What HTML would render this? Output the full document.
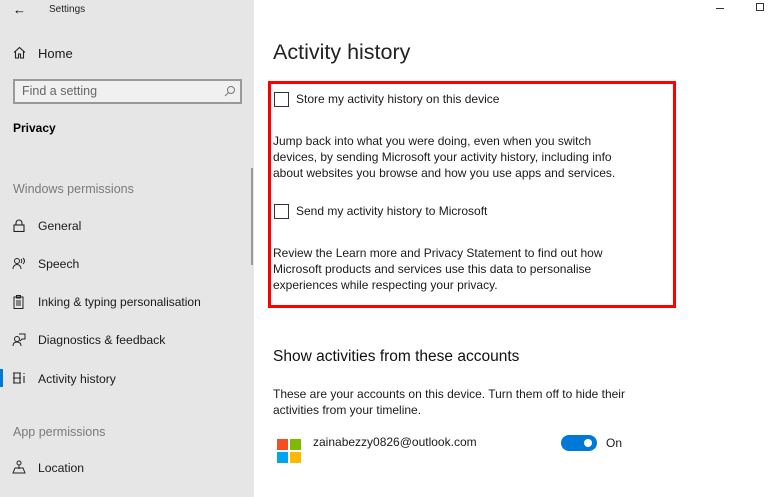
<!DOCTYPE html>
<html><head><style>
*{margin:0;padding:0;box-sizing:border-box}
body{width:768px;height:497px;overflow:hidden;background:#fff;font-family:"Liberation Sans",sans-serif;color:#000;position:relative}
.a{position:absolute;white-space:nowrap}
#side{position:absolute;left:0;top:0;width:254px;height:497px;background:#e6e6e6}
.nav{font-size:12.2px;color:#1a1a1a}
.gray{color:#7a7a7a;font-size:12.5px}
.t{font-size:12px;color:#1a1a1a}
.cb{position:absolute;width:15px;height:15px;border:1.5px solid #333}
</style></head><body>
<div id="side">
  <div class="a" style="left:13px;top:2px;font-size:13px">&#8592;</div>
  <div class="a" style="left:49px;top:4px;font-size:10px;color:#222">Settings</div>
  <svg class="a" style="left:13px;top:46px" width="13" height="13" viewBox="0 0 13 13" fill="none" stroke="#222" stroke-width="1.1"><path d="M1 6.5L6.5 1.5L12 6.5M2.5 5v7h3v-4h2v4h3V5"/></svg>
  <div class="a nav" style="left:38px;top:46px;font-size:13px">Home</div>
  <div class="a" style="left:13px;top:79px;width:229px;height:25px;border:2px solid #999;background:#f0f0f0"></div>
  <div class="a" style="left:22px;top:84px;font-size:12.5px;color:#666">Find a setting</div>
  <svg class="a" style="left:224px;top:85px" width="12" height="12" viewBox="0 0 12 12" fill="none" stroke="#777"><circle cx="7" cy="5" r="3.5"/><path d="M4.5 7.5L1 11"/></svg>
  <div class="a" style="left:13px;top:121px;font-size:12px;font-weight:bold">Privacy</div>
  <div class="a gray" style="left:13px;top:182px">Windows permissions</div>
  <div class="a" style="left:251px;top:168px;width:2px;height:97px;background:#999"></div>
  <svg class="a" style="left:13px;top:219px" width="12" height="13" viewBox="0 0 12 13" fill="none" stroke="#222" stroke-width="1.1"><rect x="1" y="6" width="10" height="6.5"/><path d="M3 6V4a3 3 0 0 1 6 0v2"/></svg>
  <div class="a nav" style="left:38px;top:219px">General</div>
  <svg class="a" style="left:12px;top:257px" width="14" height="13" viewBox="0 0 14 13" fill="none" stroke="#222" stroke-width="1"><circle cx="5" cy="4" r="2.5"/><path d="M1 12c0-3 2-4.5 4-4.5s4 1.5 4 4.5M9 2c1 1 1 3 0 4M11 1c2 2 2 4 0 6"/></svg>
  <div class="a nav" style="left:38px;top:257px">Speech</div>
  <svg class="a" style="left:13px;top:295px" width="11" height="14" viewBox="0 0 11 14" fill="none" stroke="#222" stroke-width="1"><rect x="1" y="2" width="9" height="11.5"/><rect x="3.5" y="0.5" width="4" height="2.5"/><path d="M3 6h5M3 8h5M3 10h5"/></svg>
  <div class="a nav" style="left:38px;top:295px;font-size:12px">Inking &amp; typing personalisation</div>
  <svg class="a" style="left:12px;top:333px" width="14" height="14" viewBox="0 0 14 14" fill="none" stroke="#222" stroke-width="1"><circle cx="5" cy="6" r="2.5"/><path d="M1 13c0-3 2-4 4-4s4 1 4 4M7 1h6v5h-3l-2 2"/></svg>
  <div class="a nav" style="left:38px;top:333px">Diagnostics &amp; feedback</div>
  <div class="a" style="left:0;top:369px;width:3px;height:18px;background:#0078d7"></div>
  <svg class="a" style="left:12px;top:372px" width="15" height="12" viewBox="0 0 15 12" fill="none" stroke="#222" stroke-width="1.1"><path d="M1 1h8M1 11h8M2 1v10M8 1v10M1 6h8M12 1v1M12 4v7"/></svg>
  <div class="a nav" style="left:38px;top:372px">Activity history</div>
  <div class="a gray" style="left:13px;top:425px">App permissions</div>
  <svg class="a" style="left:12px;top:460px" width="14" height="14" viewBox="0 0 14 14" fill="none" stroke="#222" stroke-width="1"><circle cx="7" cy="3" r="2"/><path d="M7 5v4M1 13l2-5h8l2 5z"/></svg>
  <div class="a nav" style="left:38px;top:461px">Location</div>
</div>
<div class="a" style="left:716px;top:8px;width:8px;height:1px;background:#333"></div>
<div class="a" style="left:756px;top:3px;width:8px;height:8px;border:1px solid #333"></div>
<div class="a" style="left:273px;top:40px;font-size:21.5px;color:#222">Activity history</div>
<div class="a" style="left:268px;top:81px;width:408px;height:227px;border:3px solid #f00"></div>
<div class="cb" style="left:274px;top:92px"></div>
<div class="a t" style="left:296px;top:92px">Store my activity history on this device</div>
<div class="a t" style="left:273px;top:133px;line-height:16px">Jump back into what you were doing, even when you switch<br>devices, by sending Microsoft your activity history, including info<br>about websites you browse and how you use apps and services.</div>
<div class="cb" style="left:274px;top:204px"></div>
<div class="a t" style="left:296px;top:204px">Send my activity history to Microsoft</div>
<div class="a t" style="left:273px;top:245px;line-height:16px">Review the Learn more and Privacy Statement to find out how<br>Microsoft products and services use this data to personalise<br>experiences while respecting your privacy.</div>
<div class="a" style="left:273px;top:348px;font-size:15.5px;color:#111">Show activities from these accounts</div>
<div class="a t" style="left:273px;top:386px;line-height:16px">These are your accounts on this device. Turn them off to hide their<br>activities from your timeline.</div>
<div class="a" style="left:277px;top:439px;width:11px;height:11px;background:#f25022"></div>
<div class="a" style="left:290px;top:439px;width:11px;height:11px;background:#7fba00"></div>
<div class="a" style="left:277px;top:452px;width:11px;height:11px;background:#00a4ef"></div>
<div class="a" style="left:290px;top:452px;width:11px;height:11px;background:#ffb900"></div>
<div class="a t" style="left:313px;top:435px">zainabezzy0826@outlook.com</div>
<div class="a" style="left:561px;top:435px;width:36px;height:16px;border-radius:8px;background:#0078d7"></div>
<div class="a" style="left:584px;top:439px;width:8px;height:8px;border-radius:50%;background:#fff"></div>
<div class="a t" style="left:606px;top:436px">On</div>
</body></html>
